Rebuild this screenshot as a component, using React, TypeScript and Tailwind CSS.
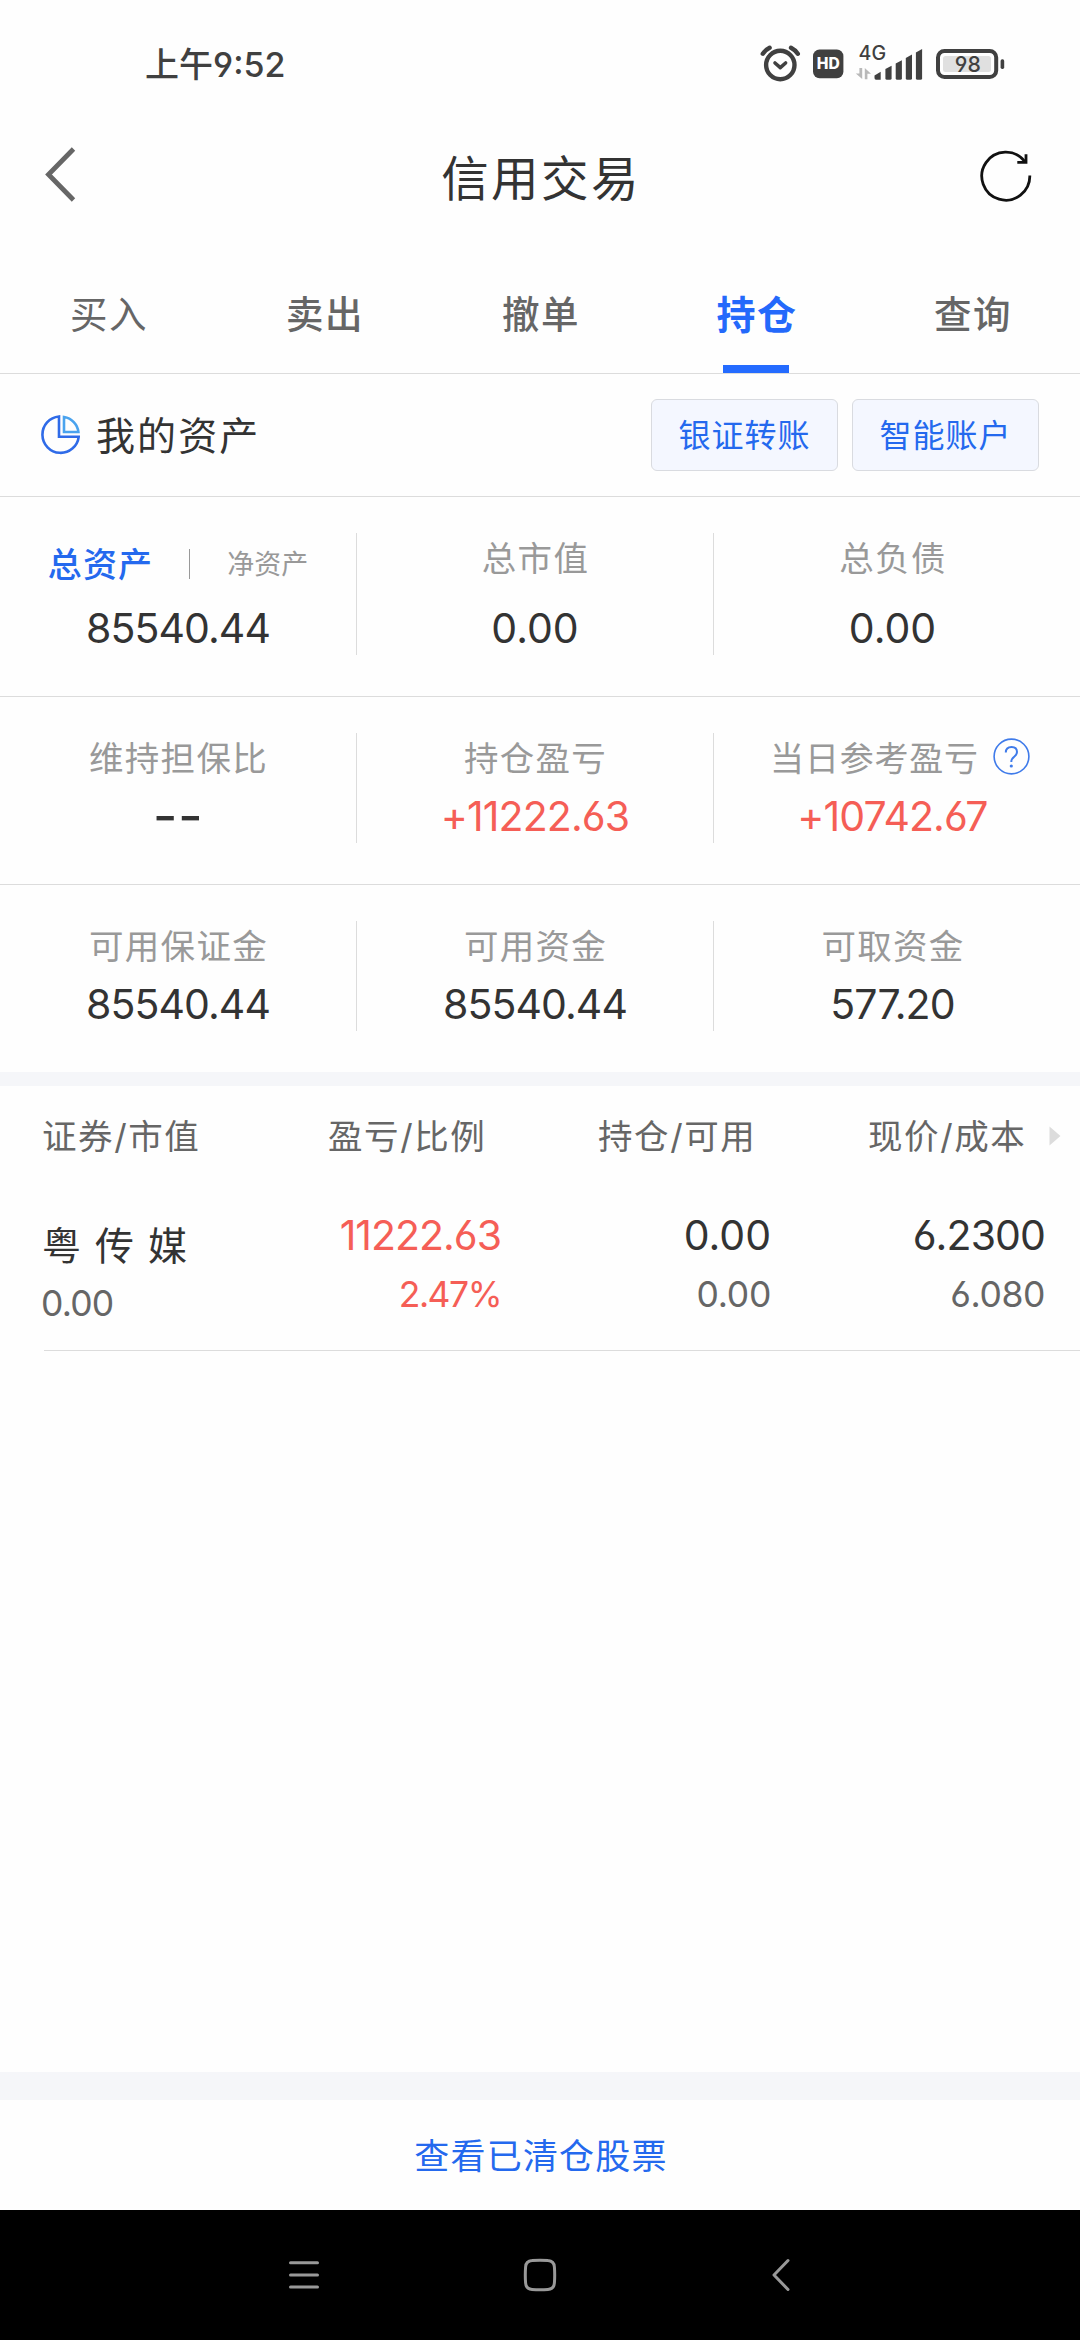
import type { ReactNode } from 'react';

const tabs = ['买入', '卖出', '撤单', '持仓', '查询'];

function StatusBar() {
  return (
    <div className="flex h-[130px] items-start justify-between pr-[75px] pl-[145px] text-[#404040]">
      <div className="mt-[42px] text-[34px] leading-[46px] font-medium">上午9:52</div>
      <svg className="mt-[40px] h-[46px] w-[248px]" viewBox="756 40 248 46" fill="none">
        <g stroke="#404040" strokeWidth="4.4" strokeLinecap="round">
          <circle cx="779.3" cy="65" r="14.2" />
          <path d="M761.8 53.8Q764.5 49.8 768.6 47.8M796.8 53.8Q794 49.8 790 47.8" />
          <path d="M774 63L779.3 67.6L784.6 63" strokeWidth="3.6" strokeLinejoin="round" />
        </g>
        <rect x="812" y="49.6" width="30.4" height="28.6" rx="6.5" fill="#404040" />
        <text x="827.2" y="69.4" fill="#fff" fontSize="15.5" fontWeight="800" textAnchor="middle" textLength="23" lengthAdjust="spacingAndGlyphs">HD</text>
        <text x="857.6" y="60.2" fill="#404040" fontSize="19.5" fontWeight="500" textLength="27.5" lengthAdjust="spacingAndGlyphs">4G</text>
        <path d="M861.2 68V79L854.8 73.6H858.4V68ZM863.8 79.2V68L870 73.8H866.4V79.2Z" fill="#b9b9b9" />
        <g fill="#404040">
          <path d="M873.5 78V75.5L879.7 71.8V79.8H875Q873.5 79.8 873.5 78Z" />
          <path d="M884.4 69L890.6 65.8V78.3Q890.6 79.8 889 79.8H886Q884.4 79.8 884.4 78.3Z" />
          <path d="M894.7 63.5L900.9 60.3V78.3Q900.9 79.8 899.3 79.8H896.3Q894.7 79.8 894.7 78.3Z" />
          <path d="M904.8 58L911 54.6V78.3Q911 79.8 909.4 79.8H906.4Q904.8 79.8 904.8 78.3Z" />
          <path d="M914.9 52.5L921.1 49V78.3Q921.1 79.8 919.5 79.8H916.5Q914.9 79.8 914.9 78.3Z" />
          <rect x="999.6" y="59.3" width="3.6" height="9.6" rx="1.6" />
        </g>
        <rect x="937" y="51" width="58.2" height="26" rx="6.5" stroke="#404040" strokeWidth="4" />
        <rect x="942" y="56" width="48" height="16" rx="2.5" fill="#e0e0e0" />
        <text x="966.8" y="72.2" fill="#404040" fontSize="21.5" fontWeight="500" textAnchor="middle" textLength="26" lengthAdjust="spacingAndGlyphs">98</text>
      </svg>
    </div>
  );
}

function TitleBar() {
  return (
    <header className="flex h-[94px] items-center justify-between pr-[47px] pl-[43px]">
      <svg className="mb-[4px] h-[58px] w-[54px]" viewBox="0 0 54 58" fill="none">
        <path d="M30.5 3L5.5 28.5L30.5 54" stroke="#666" strokeWidth="4.8" />
      </svg>
      <h1 className="mt-[3px] ml-[6px] text-[47.5px] leading-[60px] tracking-[2.4px] text-[#333]">信用交易</h1>
      <svg className="mb-[2px] h-[54px] w-[54px]" viewBox="979 149 54 54" fill="none" stroke="#111" strokeWidth="2.8">
        <path d="M1029.8 175.5A24 24 0 1 1 1024.8 161.5" />
        <path d="M1026 154.3V162.4H1017.3" />
      </svg>
    </header>
  );
}

function Tabs() {
  return (
    <nav className="grid h-[150px] grid-cols-5 border-b border-[#dcdcdc]">
      {tabs.map((tab) =>
        tab === '持仓' ? (
          <div key={tab} className="flex flex-col items-center justify-between pt-[66px] text-[#2469fb]">
            <span className="pl-[2px] text-[39px] leading-[50px] font-bold tracking-[1.6px]">{tab}</span>
            <span className="h-2 w-[66px] bg-[#246bff]" />
          </div>
        ) : (
          <div
            key={tab}
            className={`pt-[66px] pl-[2px] text-center text-[37.5px] leading-[50px] tracking-[1.5px] text-[#666] ${tab === '买入' ? 'font-normal' : 'font-medium'}`}
          >
            {tab}
          </div>
        ),
      )}
    </nav>
  );
}

function AssetHeader() {
  return (
    <div className="flex h-[123px] items-center border-b border-[#dcdcdc] pr-[41px] pl-[40px]">
      <svg className="h-[40px] w-[40px]" viewBox="0 0 40 40" fill="none" strokeWidth="2.6">
        <path d="M19 1.5A18.2 18.2 0 1 0 38.7 21.8H19Z" stroke="#2f6be8" />
        <path d="M24 2A17 17 0 0 1 38.4 17H24Z" stroke="#4aa3ee" />
      </svg>
      <span className="mt-[2px] ml-[16px] text-[39px] leading-[50px] tracking-[2.1px] text-[#333]">我的资产</span>
      <div className="ml-auto flex gap-[14px] text-[32px] leading-[71px] tracking-[1px] text-[#2469ee]">
        <button className="h-[72px] w-[187px] rounded-[6px] border border-[#d9dbe0] bg-[#f4f7ff]">银证转账</button>
        <button className="h-[72px] w-[187px] rounded-[6px] border border-[#d9dbe0] bg-[#f4f7ff]">智能账户</button>
      </div>
    </div>
  );
}

function Label({ children }: { children: ReactNode }) {
  return <div className="flex h-[50px] items-center pt-[2px] pl-px text-[34.5px] leading-[50px] tracking-[1.3px] text-[#999]">{children}</div>;
}

function Cell({ label, value, gap, tone = 'text-[#333]', last = false }: { label: ReactNode; value: string; gap: string; tone?: string; last?: boolean }) {
  const size = value === '--' ? 'text-[54px] tracking-[0.5px]' : value === '0.00' ? 'text-[41px]' : 'text-[41px] tracking-[-0.9px]';
  return (
    <div className={`flex flex-col items-center ${last ? '' : 'border-r border-[#dcdcdc]'}`}>
      {label}
      <div className={`${gap} ${tone} ${size} leading-[50px]`}>{value}</div>
    </div>
  );
}

function Assets() {
  return (
    <section className="text-[#333]">
      <div className="h-[200px] border-b border-[#dcdcdc] pt-[36px] pr-[9px]">
        <div className="grid h-[122px] grid-cols-3">
          <Cell
            gap="mt-[8px]"
            value="85540.44"
            label={
              <div className="flex h-[62px] items-center">
                <span className="pt-px text-[34px] leading-[50px] font-medium tracking-[1.1px] text-[#2469ee]">总资产</span>
                <span className="ml-[36px] h-[30px] w-px bg-[#999]" />
                <span className="ml-[37px] pt-px text-[27px] leading-[50px] text-[#999]">净资产</span>
              </div>
            }
          />
          <Cell gap="mt-[20px]" value="0.00" label={<Label>总市值</Label>} />
          <Cell gap="mt-[20px]" value="0.00" label={<Label>总负债</Label>} last />
        </div>
      </div>
      <div className="h-[188px] border-b border-[#dcdcdc] pt-[36px] pr-[9px]">
        <div className="grid h-[110px] grid-cols-3">
          <Cell gap="mt-[8px]" value="--" label={<Label>维持担保比</Label>} />
          <Cell gap="mt-[8px]" value="+11222.63" tone="text-[#f55e56]" label={<Label>持仓盈亏</Label>} />
          <Cell
            gap="mt-[8px]"
            value="+10742.67"
            tone="text-[#f55e56]"
            last
            label={
              <div className="flex h-[50px] items-center pl-[15px] text-[34px] leading-[50px] tracking-[0.8px] text-[#999]">
                <span className="pt-[2px]">当日参考盈亏</span>
                <svg className="mb-[4px] ml-[14px] h-[37px] w-[37px]" viewBox="0 0 37 37" fill="none">
                  <circle cx="18.5" cy="18.5" r="17.4" stroke="#3f7bea" strokeWidth="1.6" />
                  <path d="M12.8 14.6Q12.8 9 18.6 9Q24 9 24 14Q24 16.6 21.2 18.8Q18.3 21 18.3 24" stroke="#3f7bea" strokeWidth="2" />
                  <circle cx="18.3" cy="28" r="1.6" fill="#3f7bea" />
                </svg>
              </div>
            }
          />
        </div>
      </div>
      <div className="h-[187px] pt-[36px] pr-[9px]">
        <div className="grid h-[110px] grid-cols-3">
          <Cell gap="mt-[8px]" value="85540.44" label={<Label>可用保证金</Label>} />
          <Cell gap="mt-[8px]" value="85540.44" label={<Label>可用资金</Label>} />
          <Cell gap="mt-[8px]" value="577.20" label={<Label>可取资金</Label>} last />
        </div>
      </div>
    </section>
  );
}

function Holdings() {
  return (
    <section className="flex-1">
      <div className="flex h-[100px] items-center pt-[2px] text-[34.5px] leading-[50px] tracking-[1.6px] text-[#666]">
        <span className="w-[286px] pl-[42px]">证券/市值</span>
        <span className="w-[270px] pl-[42px]">盈亏/比例</span>
        <span className="w-[270px] pl-[42px]">持仓/可用</span>
        <span className="pl-[42px]">现价/成本</span>
        <svg className="mr-[19px] mb-[3px] ml-auto h-[20px] w-[12px]" viewBox="0 0 12 20">
          <path d="M0.5 0.5L11.5 10L0.5 19.5Z" fill="#dcdcdc" />
        </svg>
      </div>
      <div className="ml-[44px] flex h-[165px] border-b border-[#dcdcdc]">
        <div className="w-[210px] pt-[35px]">
          <div className="-ml-[2px] text-[39px] leading-[50px] whitespace-nowrap text-[#333]">
            <span className="[word-spacing:3px]">粤 传 媒</span>
          </div>
          <div className="mt-[8px] -ml-[3px] text-[35.5px] leading-[50px] tracking-[-0.8px] text-[#666]">0.00</div>
        </div>
        <div className="w-[246px] pt-[24px] text-right text-[#f55e56]">
          <div className="-mr-px text-[41px] leading-[50px] tracking-[-1px]">11222.63</div>
          <div className="mt-[10px] -mr-px text-[35.5px] leading-[50px] tracking-[-1.5px]">2.47%</div>
        </div>
        <div className="w-[271px] pt-[24px] text-right">
          <div className="text-[41px] leading-[50px] text-[#333]">0.00</div>
          <div className="mt-[10px] text-[35.5px] leading-[50px] tracking-[-0.3px] text-[#666]">0.00</div>
        </div>
        <div className="w-[274px] pt-[24px] text-right">
          <div className="text-[41px] leading-[50px] tracking-[-0.9px] text-[#333]">6.2300</div>
          <div className="mt-[10px] text-[35.5px] leading-[50px] tracking-[-0.4px] text-[#666]">6.080</div>
        </div>
      </div>
    </section>
  );
}

function SystemNav() {
  return (
    <div className="flex h-[130px] items-center justify-between bg-black px-[284px]">
      <svg className="h-[40px] w-[40px]" viewBox="0 0 40 40" stroke="#999" strokeWidth="3" strokeLinecap="round">
        <path d="M6.5 7.7H33.5M6.5 19.9H33.5M6.5 32H33.5" />
      </svg>
      <svg className="h-[40px] w-[40px]" viewBox="0 0 40 40" fill="none" stroke="#999" strokeWidth="3">
        <path d="M12 5.6Q20 4.8 28 5.6Q34 6 34.4 12Q35 20 34.4 28Q34 34 28 34.4Q20 35.2 12 34.4Q6 34 5.6 28Q5 20 5.6 12Q6 6 12 5.6Z" />
      </svg>
      <svg className="h-[40px] w-[40px]" viewBox="0 0 40 40" fill="none" stroke="#999" strokeWidth="3" strokeLinecap="round" strokeLinejoin="round">
        <path d="M32 5.5L18 20L32 34.5" />
      </svg>
    </div>
  );
}

export default function App() {
  return (
    <div className="flex h-[2340px] w-[1080px] flex-col overflow-hidden bg-[#fefefe] font-['Inter','Noto_Sans_CJK_SC',sans-serif] [font-feature-settings:'cv03','cv04']">
      <StatusBar />
      <TitleBar />
      <Tabs />
      <AssetHeader />
      <Assets />
      <div className="h-[14px] bg-[#f5f6f9]" />
      <Holdings />
      <div className="h-[28px] bg-[#f5f6f9]" />
      <div className="h-[110px] pl-[2px] text-center text-[35px] leading-[112px] tracking-[1.2px] text-[#2469ee]">查看已清仓股票</div>
      <SystemNav />
    </div>
  );
}
